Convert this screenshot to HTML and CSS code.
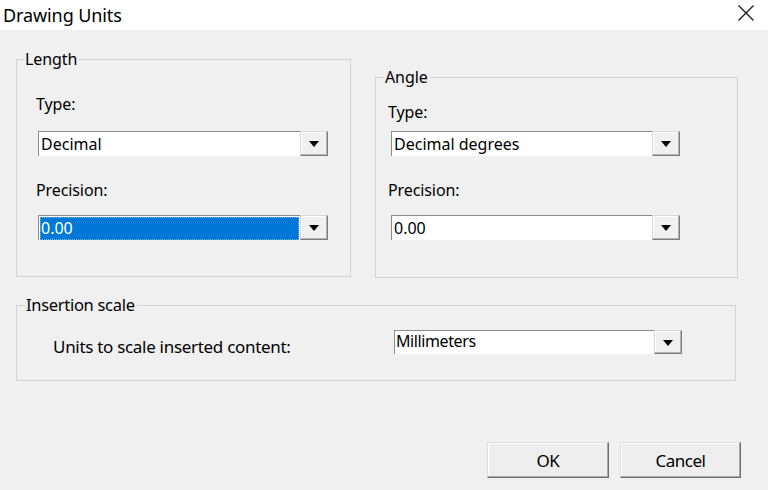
FILE: index.html
```html
<!DOCTYPE html>
<html>
<head>
<meta charset="utf-8">
<title>Drawing Units</title>
<link rel="stylesheet" href="styles.css">
</head>
<body>
<div class="dialog">
  <div class="titlebar">
    <span class="title">Drawing Units</span>
    <span class="close" aria-label="Close">
      <svg width="18" height="18" viewBox="0 0 18 18"><path d="M1.5 1.5 L16.5 16.5 M16.5 1.5 L1.5 16.5" stroke="#1a1a1a" stroke-width="1.3" fill="none"/></svg>
    </span>
  </div>
  <div class="body">
    <div class="top-row">
      <fieldset class="group group-length">
        <legend>Length</legend>
        <label class="lbl lbl-type">Type:</label>
        <div class="combo combo-type">
          <div class="field">Decimal</div>
          <div class="drop"><span class="arrow"></span></div>
        </div>
        <label class="lbl lbl-prec">Precision:</label>
        <div class="combo combo-prec">
          <div class="field selected"><span class="focus">0.00</span></div>
          <div class="drop"><span class="arrow"></span></div>
        </div>
      </fieldset>
      <fieldset class="group group-angle">
        <legend>Angle</legend>
        <label class="lbl lbl-type">Type:</label>
        <div class="combo combo-type">
          <div class="field">Decimal degrees</div>
          <div class="drop"><span class="arrow"></span></div>
        </div>
        <label class="lbl lbl-prec">Precision:</label>
        <div class="combo combo-prec">
          <div class="field">0.00</div>
          <div class="drop"><span class="arrow"></span></div>
        </div>
      </fieldset>
    </div>
    <fieldset class="group group-insert">
      <legend>Insertion scale</legend>
      <div class="insert-row">
        <label class="lbl lbl-units">Units to scale inserted content:</label>
        <div class="combo combo-units">
          <div class="field">Millimeters</div>
          <div class="drop"><span class="arrow"></span></div>
        </div>
      </div>
    </fieldset>
    <div class="buttons">
      <button class="btn btn-ok">OK</button>
      <button class="btn btn-cancel">Cancel</button>
    </div>
  </div>
</div>
</body>
</html>
```
FILE: styles.css
```css
* { box-sizing: border-box; }
html, body {
  margin: 0;
  padding: 0;
  width: 768px;
  height: 490px;
  overflow: hidden;
  background: #f0f0f0;
  font-family: "Noto Sans", "Open Sans", sans-serif;
  color: #000;
}
.dialog {
  width: 768px;
  height: 490px;
  display: flex;
  flex-direction: column;
}
.titlebar {
  height: 30px;
  background: #ffffff;
  display: flex;
  align-items: center;
  justify-content: space-between;
  padding: 0 13px 0 3px;
}
.title {
  font-size: 18px;
  line-height: 30px;
  letter-spacing: -0.1px;
  color: #000;
}
.close {
  display: flex;
  width: 18px;
  height: 18px;
  margin-top: -4px;
}
.body {
  padding: 0 27px 0 16px;
  display: flex;
  flex-direction: column;
}
.top-row {
  display: flex;
  align-items: flex-start;
  gap: 24px;
}
.group {
  margin: 0;
  border: 1px solid #d3d3d3;
  min-width: 0;
}
.group legend {
  font-size: 16px;
  line-height: 22px;
  padding: 0 2px 0 1px;
  letter-spacing: -0.1px;
}
.lbl {
  display: block;
  font-size: 16px;
  line-height: 22px;
  letter-spacing: -0.1px;
}
.group-length {
  margin-top: 18px;
  width: 335px;
  height: 229px;
  padding: 23px 21px 0 21px;
}
.group-length legend { margin-left: -14px; }
.group-length .lbl { margin-left: -2px; }
.group-length .combo-type { margin-top: 16px; }
.group-length .lbl-prec { margin-top: 23px; }
.group-length .combo-prec { margin-top: 14px; }

.group-angle {
  margin-top: 36px;
  width: 363px;
  height: 212px;
  padding: 13px 56px 0 15px;
}
.group-angle legend { margin-left: -7px; }
.group-angle .lbl { margin-left: -3px; }
.group-angle .combo-type { margin-top: 8px; }
.group-angle .lbl-prec { margin-top: 23px; }
.group-angle .combo-prec { margin-top: 14px; }

.combo {
  display: flex;
  height: 25px;
  background: #ffffff;
}
.field {
  flex: 1;
  border-top: 1px solid #8c8c8c;
  border-left: 1px solid #8c8c8c;
  background: #ffffff;
  font-size: 16px;
  line-height: 24px;
  padding-left: 2px;
  letter-spacing: 0;
  white-space: nowrap;
  overflow: hidden;
}
.field.selected {
  padding: 1px;
}
.field.selected .focus {
  display: block;
  height: 23px;
  background: #0078d7;
  color: #ffffff;
  border: 1px dotted #7fb0e0;
  line-height: 21px;
  padding-left: 0;
}
.drop {
  width: 28px;
  background: #f0f0f0;
  border-top: 1px solid #d8d8d8;
  border-left: 1px solid #d8d8d8;
  border-right: 1px solid #7c7c7c;
  border-bottom: 1px solid #7c7c7c;
  box-shadow: inset -1px -1px 0 #b4b4b4, inset 1px 1px 0 #ffffff;
  display: flex;
  align-items: center;
  justify-content: center;
}
.arrow {
  width: 0;
  height: 0;
  border-left: 5px solid transparent;
  border-right: 5px solid transparent;
  border-top: 6px solid #000;
  margin-top: 1px;
}
.group-length .combo { width: 290px; }
.group-angle .combo { width: 289px; }

.group-insert {
  margin-top: 16px;
  width: 720px;
  height: 87px;
  padding: 14px 0 0 36px;
}
.group-insert legend {
  margin-left: -28px;
  font-size: 16.5px;
  letter-spacing: -0.3px;
}
.insert-row {
  display: flex;
  align-items: flex-start;
}
.lbl-units {
  width: 341px;
  font-size: 17px;
  margin-top: 6px;
  letter-spacing: -0.3px;
}
.combo-units {
  width: 288px;
  height: 24px;
}
.combo-units .field {
  font-size: 16px;
  line-height: 21px;
  padding-left: 1px;
  letter-spacing: -0.4px;
}
.buttons {
  display: flex;
  justify-content: flex-end;
  gap: 11px;
  margin-top: 61px;
}
.btn {
  width: 122px;
  height: 36px;
  font-family: "Noto Sans", "Open Sans", sans-serif;
  font-size: 17px;
  letter-spacing: -0.5px;
  color: #000;
  background: #eeeeee;
  border-top: 1px solid #dcdcdc;
  border-left: 1px solid #dcdcdc;
  border-right: 1px solid #6e6e6e;
  border-bottom: 1px solid #6e6e6e;
  box-shadow: inset -1px -1px 0 #a8a8a8, inset 1px 1px 0 #ffffff;
  padding: 0;
}
.btn-cancel { width: 121px; }
```
